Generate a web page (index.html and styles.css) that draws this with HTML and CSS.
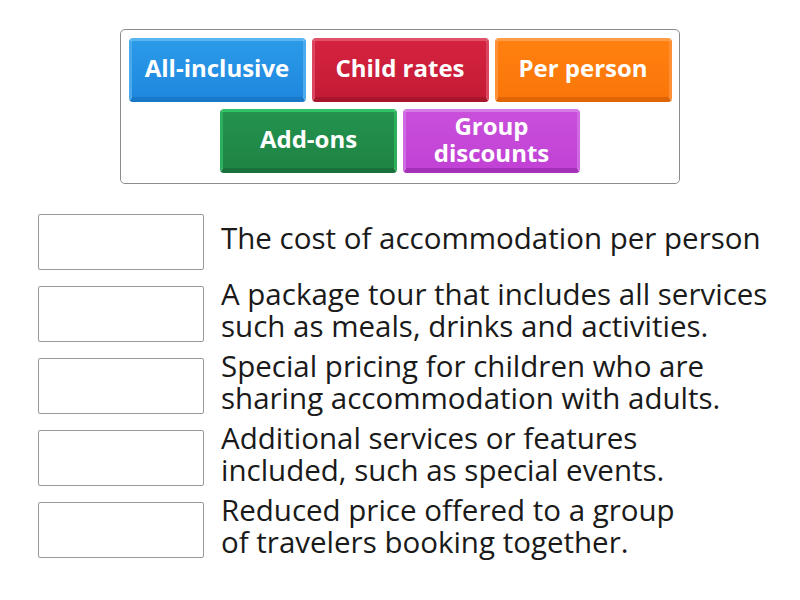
FILE: index.html
```html
<!DOCTYPE html>
<html>
<head>
<meta charset="utf-8">
<link rel="stylesheet" href="styles.css">
</head>
<body>
<div class="page">
<div class="bank">
  <div class="bank-row">
    <div class="tile tile-blue">All-inclusive</div>
    <div class="tile tile-red">Child rates</div>
    <div class="tile tile-orange">Per person</div>
  </div>
  <div class="bank-row">
    <div class="tile tile-green">Add-ons</div>
    <div class="tile tile-purple">Group<br>discounts</div>
  </div>
</div>
<div class="items">
  <div class="item">
    <div class="slot"></div>
    <div class="desc">The cost of accommodation per person</div>
  </div>
  <div class="item">
    <div class="slot"></div>
    <div class="desc">A package tour that includes all services<br>such as meals, drinks and activities.</div>
  </div>
  <div class="item">
    <div class="slot"></div>
    <div class="desc">Special pricing for children who are<br>sharing accommodation with adults.</div>
  </div>
  <div class="item">
    <div class="slot"></div>
    <div class="desc">Additional services or features<br>included, such as special events.</div>
  </div>
  <div class="item">
    <div class="slot"></div>
    <div class="desc">Reduced price offered to a group<br>of travelers booking together.</div>
  </div>
</div>
</div>
</body>
</html>
```
FILE: styles.css
```css
* { box-sizing: border-box; }
body {
  margin: 0;
  background: #fff;
  font-family: "Open Sans", "Liberation Sans", sans-serif;
  color: #1a1a1a;
}
.page {
  min-height: 600px;
  padding-top: 29px;
}
.bank {
  margin-left: 120px;
  width: 560px;
  height: 155px;
  border: 1px solid #8c8c8c;
  border-radius: 5px;
  padding: 8px;
  display: flex;
  flex-direction: column;
  align-items: center;
  gap: 7px;
}
.bank-row {
  display: flex;
  gap: 6px;
}
.tile {
  width: 177px;
  height: 64px;
  border-radius: 4px;
  border-style: solid;
  border-width: 3px 3px 5px 3px;
  display: flex;
  align-items: center;
  justify-content: center;
  text-align: center;
  color: #fff;
  font-weight: 700;
  font-size: 24px;
  line-height: 27px;
  padding: 0 2px 3px;
}
.tile-blue {
  background: linear-gradient(#2b9ae9, #1f88de);
  border-color: #59b5f0 #4aaaee #1a78c8 #4aaaee;
}
.tile-red {
  background: linear-gradient(#d52340, #c41a35);
  border-color: #e0516a #db4560 #a8162c #db4560;
}
.tile-orange {
  background: linear-gradient(#ff800f, #fb760a);
  border-color: #ff9c45 #ff9036 #e06605 #ff9036;
}
.tile-green {
  background: linear-gradient(#23934e, #1f8445);
  border-color: #31c466 #2cb05b #1a703b #2cb05b;
}
.tile-purple {
  background: linear-gradient(#c94fdb, #c142d5);
  border-color: #d67ae5 #d06ae2 #a530b8 #d06ae2;
}
.items {
  margin: 30px 0 0 38px;
  display: flex;
  flex-direction: column;
  gap: 16px;
}
.item {
  display: grid;
  grid-template-columns: 166px auto;
  grid-template-rows: 56px;
  column-gap: 17px;
  align-items: center;
  height: 56px;
}
.slot {
  width: 166px;
  height: 56px;
  border: 1px solid #9a9a9a;
  border-radius: 2px;
  background: #fff;
}
.desc {
  font-size: 29.5px;
  line-height: 32px;
  padding-bottom: 8px;
  color: #1a1a1a;
  white-space: nowrap;
}
```
